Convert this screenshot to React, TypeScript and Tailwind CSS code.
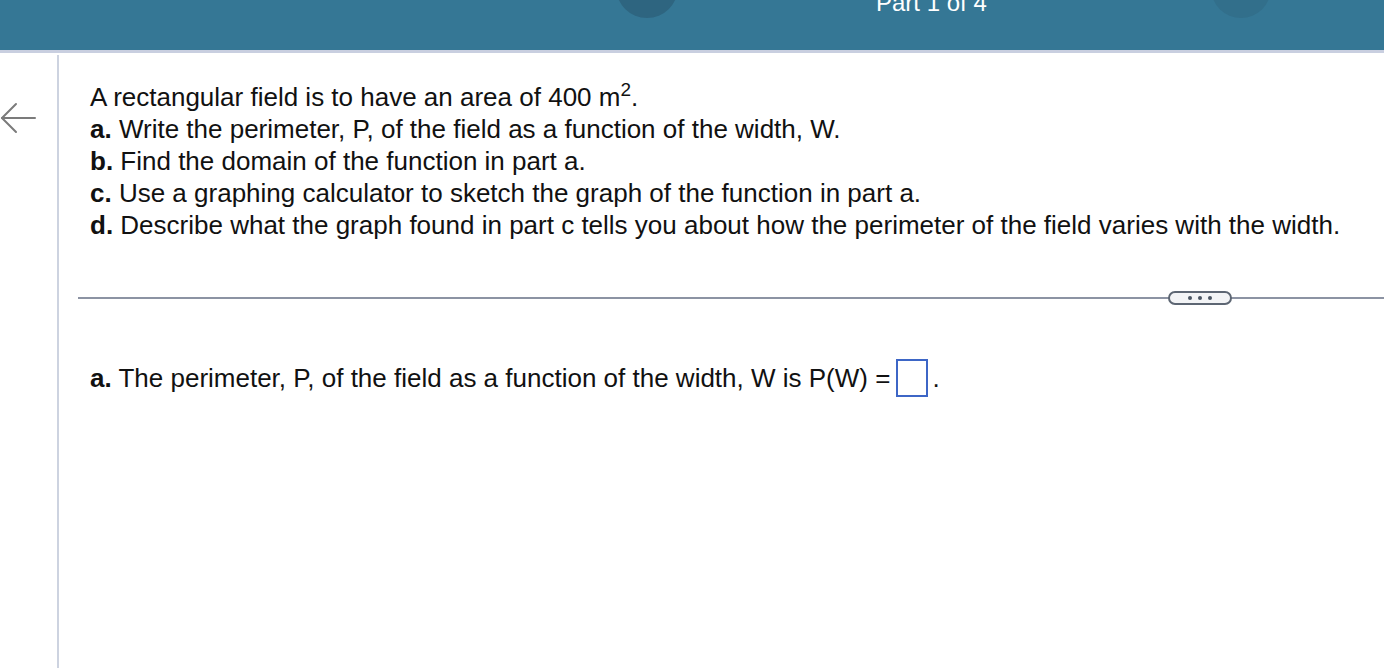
import React from "react";

export default function App() {
  return (
    <div className="w-[1384px] h-[668px] overflow-hidden bg-white flex flex-col" style={{ fontFamily: '"Liberation Sans", Arial, sans-serif' }}>
      {/* top bar */}
      <div className="relative h-[53px] shrink-0 bg-[#357795] border-b-[3px] border-[#c9cfe0] overflow-hidden">
        <div className="absolute left-[616px] top-[-44px] w-[62px] h-[62px] rounded-full bg-[#2e6580]" />
        <div className="absolute left-[1211px] top-[-42px] w-[60px] h-[60px] rounded-full bg-[#326f8b]" />
        <div className="absolute left-[876px] top-[-9px] text-[24px] leading-[24px] text-white">Part 1 of 4</div>
        <div className="absolute left-[0px] top-[-21px] text-[19px] leading-[20px] text-white tracking-[6px]">Q y Q y Q</div>
      </div>

      <div className="flex flex-1">
        {/* left rail */}
        <div className="w-[59px] shrink-0 flex flex-col">
          <div className="flex-1 mt-[2px] border-r-2 border-[#cdd3e0] pt-[47px]">
            <svg width="38" height="32" viewBox="0 0 38 32" fill="none" stroke="#7b7b7b" strokeWidth="2" strokeLinecap="round" strokeLinejoin="round">
              <path d="M2 16 H35" />
              <path d="M16 2 L2 16 L16 30" />
            </svg>
          </div>
        </div>

        {/* content */}
        <div className="flex-1 flex flex-col">
          <div className="pl-[31px] pt-[28px] text-[26px] leading-[32px] text-[#111]">
            <p>
              A rectangular field is to have an area of 400 m<sup className="text-[19px] leading-none relative top-[-10px]">2</sup>.
            </p>
            <p><b>a.</b> Write the perimeter, P, of the field as a function of the width, W.</p>
            <p><b>b.</b> Find the domain of the function in part a.</p>
            <p><b>c.</b> Use a graphing calculator to sketch the graph of the function in part a.</p>
            <p><b>d.</b> Describe what the graph found in part c tells you about how the perimeter of the field varies with the width.</p>
          </div>

          <div className="mt-[49px] ml-[19px] relative flex items-center h-[16px]">
            <div className="flex-1 h-[2px] bg-[#8c93a3]" />
            <div className="absolute left-[1090px] top-[1px] w-[64px] h-[14px] rounded-full border-2 border-[#5d6673] bg-[#f3f4f6] flex items-center justify-center gap-[6px]">
              <span className="w-[4px] h-[4px] rounded-full bg-[#4b5563]" />
              <span className="w-[4px] h-[4px] rounded-full bg-[#4b5563]" />
              <span className="w-[4px] h-[4px] rounded-full bg-[#4b5563]" />
            </div>
          </div>

          <div className="pl-[31px] mt-[53px] flex items-center text-[26px] leading-[32px] text-[#111]">
            <span><b>a.</b> The perimeter, P, of the field as a function of the width, W is P(W) =</span>
            <span className="ml-[6px] w-[32px] h-[38px] border-2 border-[#3d66c6] inline-block" />
            <span className="ml-[4px]">.</span>
          </div>
        </div>
      </div>
    </div>
  );
}
